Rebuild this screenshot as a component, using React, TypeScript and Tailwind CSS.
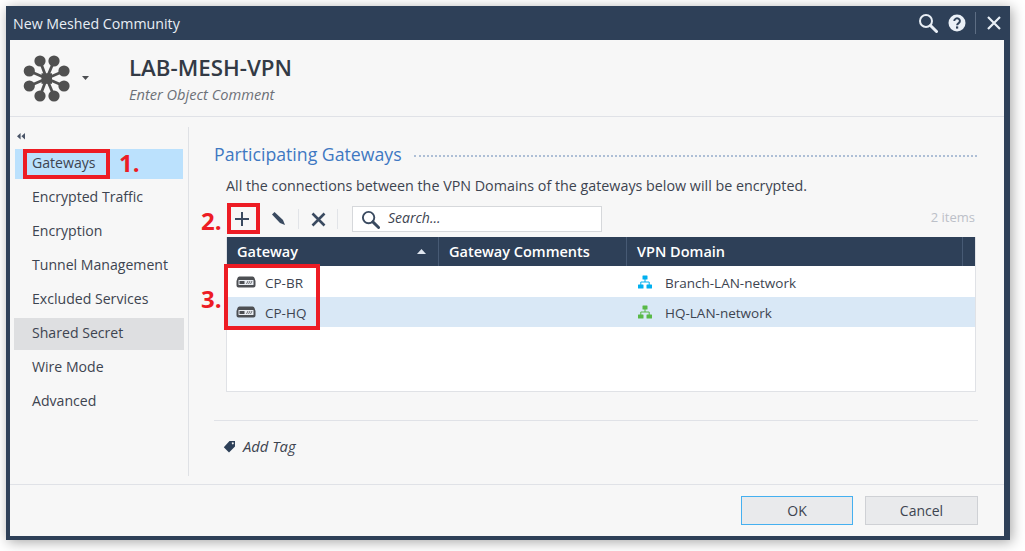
import React from "react";

function MeshIcon() {
  const pts = [[40, 62], [54, 62], [29.3, 72], [64, 72], [29.3, 87], [64, 87], [40, 97], [54, 97]];
  return (
    <svg width="50" height="50" viewBox="22 55 50 50" className="shrink-0">
      {pts.map(([x, y], i) => (
        <g key={i}>
          <line x1="46.7" y1="79.5" x2={x} y2={y} stroke="#505050" strokeWidth="2.8" />
          <circle cx={x} cy={y} r="5.6" fill="#505050" />
        </g>
      ))}
      <rect x="41.5" y="74.3" width="10.5" height="10.5" fill="#505050" />
    </svg>
  );
}

function GatewayIcon() {
  return (
    <svg width="20" height="12" viewBox="0 0 20 12" className="shrink-0">
      <path d="M3.5 0.5h13a2 2 0 0 1 2 1.6l1 3v4.4a2 2 0 0 1-2 2h-15a2 2 0 0 1-2-2V5.1l1-3a2 2 0 0 1 2-1.6z" fill="#4d4f53" />
      <rect x="2.5" y="4" width="15" height="5" rx="0.5" fill="#e9edf2" />
      <rect x="3.5" y="5" width="5" height="3" fill="#4d4f53" />
      <path d="M10.5 8l1.5-3M12.5 8l1.5-3M14.5 8l1.5-3" stroke="#4d4f53" strokeWidth="0.8" />
    </svg>
  );
}

function NetIcon({ color }: { color: string }) {
  return (
    <svg width="14" height="14" viewBox="0 0 14 14" className="shrink-0">
      <rect x="4.5" y="0.5" width="5" height="4" rx="0.5" fill={color} />
      <path d="M7 4v3M2.8 10V7h8.4v3" fill="none" stroke={color} strokeWidth="1" />
      <rect x="0" y="9.5" width="5.5" height="4" rx="0.5" fill={color} />
      <rect x="8.5" y="9.5" width="5.5" height="4" rx="0.5" fill={color} />
    </svg>
  );
}

function SearchIcon({ color, size, stroke }: { color: string; size: number; stroke: number }) {
  return (
    <svg width={size} height={size} viewBox="0 0 20 20" className="shrink-0">
      <circle cx="8" cy="8" r="6" fill="none" stroke={color} strokeWidth={stroke} />
      <line x1="12.5" y1="12.5" x2="18.5" y2="18.5" stroke={color} strokeWidth={stroke + 1} strokeLinecap="round" />
    </svg>
  );
}

const navItems = ["Gateways", "Encrypted Traffic", "Encryption", "Tunnel Management", "Excluded Services", "Shared Secret", "Wire Mode", "Advanced"];

function Nav() {
  return (
    <div className="w-[179px] shrink-0 border-r border-[#dfe1e5] mt-[10px] mb-[8px]">
      <svg width="8" height="7" viewBox="0 0 8 7" className="ml-[7px] mt-[6px] block">
        <path d="M3.6 0v6.5L0 3.2zM8 0v6.5L4.4 3.2z" fill="#4a5568" />
      </svg>
      <div className="mt-[7px] flex flex-col">
        {navItems.map((n) => {
          const gw = n === "Gateways";
          const ss = n === "Shared Secret";
          return (
            <div key={n} className="h-[34px] flex items-center">
              {gw ? (
                <div className="bg-[#bbe1fd] h-[30px] ml-[5px] mr-[5px] w-full pl-[17px] pb-[2px] flex items-center">{n}</div>
              ) : ss ? (
                <div className="bg-[#dedfe1] h-[32px] ml-[4px] mr-[4px] w-full pl-[18px] pb-[2px] flex items-center">{n}</div>
              ) : (
                <div className="pl-[22px] pb-[2px]">{n}</div>
              )}
            </div>
          );
        })}
      </div>
    </div>
  );
}

function Row({ name, domain, color, selected }: { name: string; domain: string; color: string; selected?: boolean }) {
  return (
    <div className={`h-[30px] flex items-center text-[13.5px] ${selected ? "bg-[#d9e8f6]" : "bg-white"}`}>
      <div className="w-[211px] flex items-center pl-[9px] gap-[9px]">
        <GatewayIcon />
        <span className="pt-[3px]">{name}</span>
      </div>
      <div className="w-[188px]" />
      <div className="flex items-center pl-[12px] gap-[13px]">
        <NetIcon color={color} />
        <span className="pt-[3px]">{domain}</span>
      </div>
    </div>
  );
}

function RedLabel({ className, children }: { className: string; children: React.ReactNode }) {
  return <div className={`absolute text-[#ed1c24] font-bold text-[24px] leading-none ${className}`}>{children}</div>;
}

export default function App() {
  return (
    <div className="relative w-[1025px] h-[551px] overflow-hidden bg-[#ffffff] pl-[6px] pt-[6px] text-[#3d4450]" style={{ fontFamily: '"Open Sans", "Noto Sans", sans-serif' }}>
      <div className="w-[1004px] h-[534px] flex flex-col bg-[#2e4058] shadow-[2px_2px_12px_rgba(0,0,0,0.35)]">
        <div className="h-[34px] shrink-0 flex items-center pl-[7px] pr-[7px] text-[14.2px]">
          <span className="text-[#e8eef5] pt-[2px]">New Meshed Community</span>
          <div className="ml-auto flex items-center">
            <SearchIcon color="#e8eef5" size={20} stroke={2} />
            <svg width="18" height="18" viewBox="0 0 18 18" className="ml-[10px]">
              <circle cx="9" cy="9" r="8.5" fill="#eaf0f7" />
              <path d="M6.3 7a2.8 2.6 0 1 1 4.4 2.1c-1 .7-1.6 1.1-1.6 2.2" fill="none" stroke="#2e4058" strokeWidth="2" />
              <rect x="8" y="12.4" width="2.2" height="2.2" fill="#2e4058" />
            </svg>
            <div className="w-px h-[22px] bg-[#5d6d83] ml-[9px]" />
            <svg width="14" height="14" viewBox="0 0 14 14" className="ml-[11px] mr-[2px]">
              <path d="M1 1l12 12M13 1L1 13" stroke="#eaf0f7" strokeWidth="2.2" />
            </svg>
          </div>
        </div>
        <div className="flex-1 ml-[4px] mr-[6px] mb-[4px] bg-[#f7f7f7] flex flex-col min-h-0">
          <div className="h-[77px] shrink-0 border-b border-[#e0e2e7] flex items-start pl-[12px] pt-[14px]">
            <MeshIcon />
            <svg width="7" height="4" viewBox="0 0 7 4" className="ml-[10px] mt-[22px] shrink-0">
              <path d="M0 0h7L3.5 4z" fill="#4d4f53" />
            </svg>
            <div className="ml-[40px]">
              <div className="text-[22.3px] leading-[27px] font-semibold text-[#333a45]">LAB-MESH-VPN</div>
              <div className="text-[14.6px] leading-[18px] mt-[4px] italic text-[#6d7178]">Enter Object Comment</div>
            </div>
          </div>
          <div className="flex-1 flex min-h-0 text-[14.1px]">
            <Nav />
            <div className="flex-1 pl-[25px] pr-[27px] min-w-0">
              <div className="flex items-center mt-[27px] h-[24px]">
                <span className="text-[#3e78c2] text-[17.7px] whitespace-nowrap pb-[3px]">Participating Gateways</span>
                <div className="flex-1 ml-[12px] border-t-2 border-dotted border-[#aebfd6]" />
              </div>
              <div className="pl-[12px] mt-[9px] text-[14.3px] leading-[18px] whitespace-nowrap text-[#3d4450]">All the connections between the VPN Domains of the gateways below will be encrypted.</div>
              <div className="flex items-center h-[28px] mt-[10px] pl-[12px]">
                <div className="w-[32px] flex justify-center">
                  <svg width="16" height="16" viewBox="0 0 16 16"><path d="M8 1v14M1 8h14" stroke="#3a4a60" strokeWidth="2" /></svg>
                </div>
                <div className="w-px h-[20px] bg-[#e2e4e8] ml-[1px]" />
                <div className="w-[38px] flex justify-center">
                  <svg width="16" height="16" viewBox="0 0 16 16"><path d="M1 3.5L3.5 1l8.5 8 2 5-5-2z" fill="#3a4a60" /></svg>
                </div>
                <div className="w-px h-[20px] bg-[#e2e4e8]" />
                <div className="w-[38px] flex justify-center">
                  <svg width="15" height="15" viewBox="0 0 15 15"><path d="M1.5 1.5l12 12M13.5 1.5l-12 12" stroke="#3a4a60" strokeWidth="2.6" /></svg>
                </div>
                <div className="w-px h-[20px] bg-[#e2e4e8]" />
                <div className="ml-[14px] w-[250px] h-[26px] bg-white border border-[#d6d8db] flex items-center pl-[8px] gap-[8px] text-[14px] italic">
                  <SearchIcon color="#3a4a60" size={19} stroke={2} />
                  <span className="pb-[3px]">Search...</span>
                </div>
                <span className="ml-auto mr-[2px] text-[13px] text-[#bcc0c8] pb-[2px]">2 items</span>
              </div>
              <div className="mt-[4px] ml-[12px] mr-[1px] border border-t-0 border-[#e0e2e6] bg-white h-[155px] flex flex-col">
                <div className="h-[29px] bg-[#2e4058] flex items-center text-white text-[14.5px] font-semibold shrink-0 mb-px">
                  <div className="w-[212px] h-full flex items-center pl-[10px] border-r border-[#475a74]">
                    Gateway
                    <svg width="9" height="5" viewBox="0 0 9 5" className="ml-auto mr-[12px]"><path d="M0 5h9L4.5 0z" fill="#dfe6ef" /></svg>
                  </div>
                  <div className="w-[188px] h-full flex items-center pl-[10px] border-r border-[#475a74]">Gateway Comments</div>
                  <div className="w-[336px] h-full flex items-center pl-[10px] border-r border-[#475a74]">VPN Domain</div>
                </div>
                <Row name="CP-BR" domain="Branch-LAN-network" color="#00b0f0" />
                <Row name="CP-HQ" domain="HQ-LAN-network" color="#59b947" selected />
              </div>
              <div className="mt-[28px] border-t border-[#e0e2e7] -mr-[1px] h-[52px] flex items-center pl-[9px] gap-[7px] italic text-[14.8px]">
                <svg width="13" height="13" viewBox="0 0 13 13">
                  <path d="M6.5 1H12v5.5L6 12.5.8 7.3zM9.8 2.2a1 1 0 1 0 .01 0z" fill="#2e4058" fillRule="evenodd" />
                </svg>
                Add Tag
              </div>
            </div>
          </div>
          <div className="h-[52px] shrink-0 border-t border-[#e0e2e7] flex items-start justify-end pr-[26px] pt-[11px] gap-[12px] text-[14px]">
            <button className="w-[112px] h-[29px] bg-[#e9eaec] border border-[#45b0f0]">OK</button>
            <button className="w-[113px] h-[29px] bg-[#e9eaec] border border-[#cfd1d5]">Cancel</button>
          </div>
        </div>
      </div>
      <div className="absolute left-[23px] top-[149px] w-[87px] h-[30px] border-[4px] border-[#ed1c24]" />
      <div className="absolute left-[227px] top-[203px] w-[33px] h-[31px] border-[4px] border-[#ed1c24]" />
      <div className="absolute left-[224px] top-[264px] w-[96px] h-[66px] border-[4px] border-[#ed1c24]" />
      <RedLabel className="left-[119px] top-[151px]">1.</RedLabel>
      <RedLabel className="left-[201px] top-[209px]">2.</RedLabel>
      <RedLabel className="left-[201px] top-[287px]">3.</RedLabel>
    </div>
  );
}
